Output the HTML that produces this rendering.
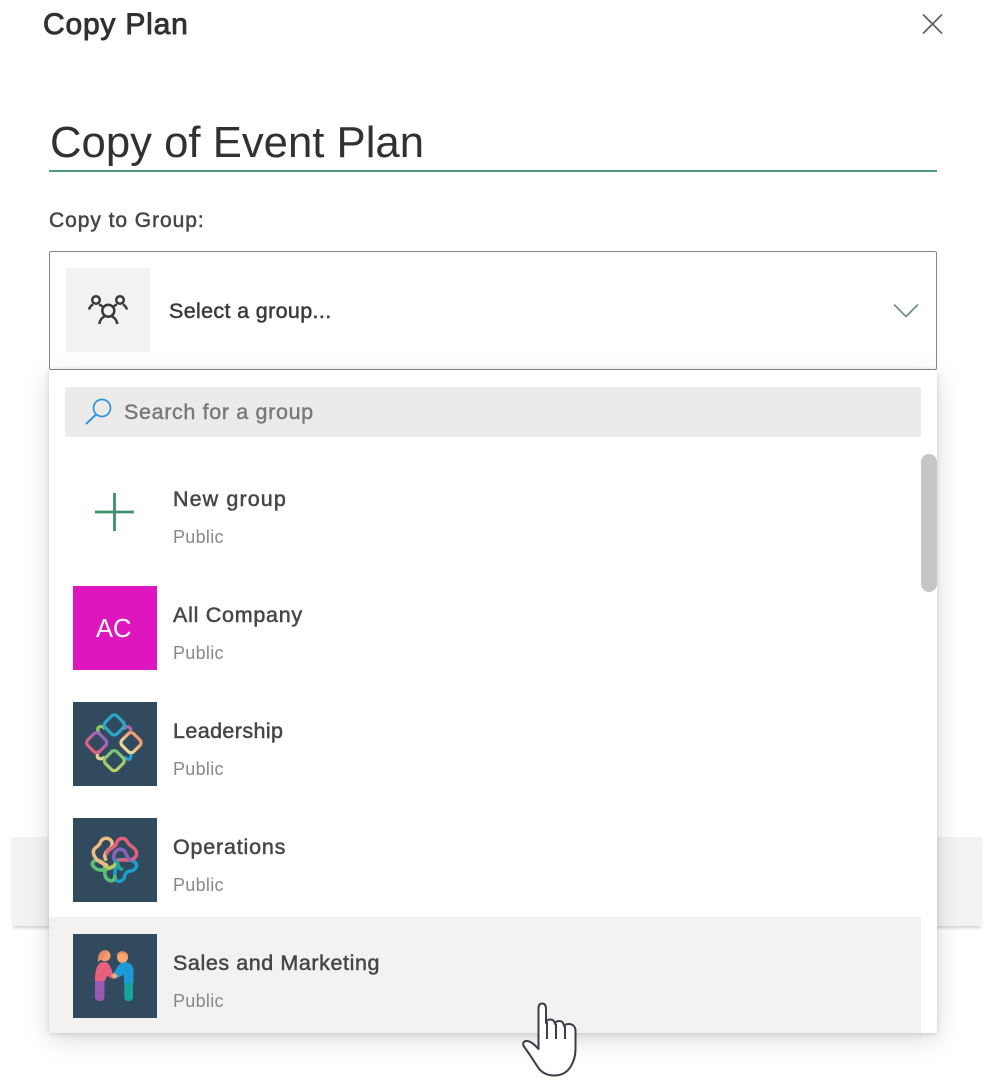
<!DOCTYPE html>
<html><head><meta charset="utf-8"><style>
html,body{margin:0;padding:0;background:#fff}
#p{position:relative;width:1002px;height:1084px;overflow:hidden;background:#fff;font-family:"Liberation Sans",sans-serif;filter:blur(.35px)}
#p div{position:absolute}
.t{white-space:nowrap;line-height:1}
.n{left:173px;font-size:21.5px;color:#484644;-webkit-text-stroke:.5px #484644}
.s{left:173px;font-size:18px;color:#8a8886;letter-spacing:.3px}
.a{left:73px;width:84px;height:84px;background:#324a5e}
svg{position:absolute;left:0;top:0}
</style></head><body><div id="p">
<div style="left:12px;top:837px;width:970px;height:89px;background:#f4f3f1;box-shadow:0 3px 3px -1px rgba(0,0,0,.18)"></div>
<div class="t" style="left:43px;top:10px;font-size:30px;color:#323130;-webkit-text-stroke:.9px #323130;letter-spacing:.8px">Copy Plan</div>
<div class="t" style="left:50px;top:121px;font-size:43.7px;color:#323130">Copy of Event Plan</div>
<div style="left:49px;top:170px;width:888px;height:2px;background:#4e9a7a"></div>
<div class="t" style="left:49px;top:210px;font-size:21px;color:#484644;-webkit-text-stroke:.5px #484644;letter-spacing:.95px">Copy to Group:</div>
<div style="left:49px;top:251px;width:886px;height:117px;border:1px solid #8a8886;border-radius:2px"></div>
<div style="left:66px;top:268px;width:84px;height:84px;background:#f3f2f1"></div>
<div class="t" style="left:169px;top:301px;font-size:21.5px;color:#3b3a39;-webkit-text-stroke:.5px #3b3a39;letter-spacing:.35px">Select a group...</div>
<div style="left:49px;top:370px;width:888px;height:663px;background:#fff;box-shadow:0 6px 24px rgba(0,0,0,.15),0 1px 5px rgba(0,0,0,.13)"></div>
<div style="left:65px;top:387px;width:856px;height:50px;background:#edebe9;border-radius:2px"></div>
<div class="t" style="left:124px;top:402px;font-size:21.5px;color:#7a7876;-webkit-text-stroke:.4px #7a7876;letter-spacing:.65px">Search for a group</div>
<div style="left:921px;top:454px;width:16px;height:138px;background:#c8c6c4;border-radius:8px"></div>
<div style="left:49px;top:917px;width:872px;height:116px;background:#f3f2f1"></div>

<div class="t n" style="top:489px;letter-spacing:1.1px">New group</div><div class="t s" style="top:528px">Public</div>
<div class="t n" style="top:605px;letter-spacing:.73px">All Company</div><div class="t s" style="top:644px">Public</div>
<div class="t n" style="top:721px;letter-spacing:.4px">Leadership</div><div class="t s" style="top:760px">Public</div>
<div class="t n" style="top:837px;letter-spacing:.8px">Operations</div><div class="t s" style="top:876px">Public</div>
<div class="t n" style="top:953px;letter-spacing:.58px">Sales and Marketing</div><div class="t s" style="top:992px">Public</div>

<div class="a" style="top:586px;background:#de16bd"></div>
<div class="t" style="left:96px;top:617px;color:#fff;font-size:25.500px">AC</div>
<div class="a" style="top:702px"></div>
<div class="a" style="top:818px"></div>
<div class="a" style="top:934px"></div>

<svg width="1002" height="1084" viewBox="0 0 1002 1084" fill="none">
 <defs>
  <linearGradient id="lp" x1="0" y1="0" x2="0" y2="1"><stop offset="0" stop-color="#9a66c0"/><stop offset="1" stop-color="#e8607a"/></linearGradient>
  <linearGradient id="lo" x1="0" y1="0" x2="0" y2="1"><stop offset="0" stop-color="#ee9a70"/><stop offset="1" stop-color="#eed79a"/></linearGradient>
  <linearGradient id="lg" x1="0" y1="0" x2="1" y2="1"><stop offset="0" stop-color="#6cc47a"/><stop offset="1" stop-color="#c0d060"/></linearGradient>
 </defs>
 <!-- close -->
 <path d="M923 14.500L942 33.500M942 14.500L923 33.500" stroke="#5f5e5c" stroke-width="1.600"/>
 <!-- chevron -->
 <path d="M894 304.500L906 316.500L918 304.500" stroke="#6f8f8c" stroke-width="1.700"/>
 <!-- group icon -->
 <g stroke="#3b3a39" stroke-width="2.500">
  <circle cx="96" cy="300" r="3.800"/><circle cx="120" cy="300" r="3.800"/>
  <circle cx="108.300" cy="310.700" r="6"/>
  <path d="M89 309.500C90 306 92 305 93 304.500M99 304.500C100.500 305 102 306 103 307M127 309.500C126 306 124 305 123 304.500M117 304.500C115.500 305 114 306 113 307"/>
  <path d="M99.300 324C100 319.500 102 317.500 104.500 316.500M117.300 324C116.500 319.500 114.500 317.500 112 316.500"/>
 </g>
 <!-- search -->
 <circle cx="102" cy="408" r="8.500" stroke="#2f93dc" stroke-width="1.700"/>
 <path d="M96 414.500L86 424" stroke="#2f93dc" stroke-width="1.900"/>
 <!-- plus -->
 <path d="M114.500 493V531M95 512H134" stroke="#3e8f6c" stroke-width="2.800"/>
 <!-- leadership -->
 <g fill="none" stroke-width="3.200">
  <path d="M99 733Q96 728 100 726.500Q103 726 105 729" stroke="#9ac05c"/>
  <path d="M123 729Q126 726 129 727Q132 729 130 733" stroke="#b066a8"/>
  <path d="M99 751Q96 755 98 758Q101 760 105 757" stroke="#e8d090"/>
  <path d="M124 757Q127 760 130 759Q132 756 130 752" stroke="#29a3d4"/>
  <rect x="106" y="716.700" width="16.500" height="16.500" rx="4" transform="rotate(45 114.300 725)" stroke="#29a8c8"/>
  <rect x="88.450" y="734.450" width="16.500" height="16.500" rx="4" transform="rotate(45 96.700 742.700)" stroke="url(#lp)"/>
  <rect x="122.750" y="734.450" width="16.500" height="16.500" rx="4" transform="rotate(45 131 742.700)" stroke="url(#lo)"/>
  <rect x="106" y="752.450" width="16.500" height="16.500" rx="4" transform="rotate(45 114.300 760.700)" stroke="url(#lg)"/>
 </g>
 <!-- operations -->
 <g transform="translate(65 810) scale(.3333)" fill="none" stroke-width="10.500" stroke-linecap="round">
  <path d="M155 150C175 148 195 148 208 155C222 165 212 182 195 183C182 185 180 195 178 203C172 216 155 218 150 205C146 190 155 170 155 150" stroke="#1aa0cc"/>
  <path d="M140 170C125 182 100 185 88 172C75 160 85 150 100 152C115 152 120 165 120 180C118 195 122 205 130 210C140 216 148 212 150 200" stroke="#5cbf74"/>
  <path d="M118 162C128 178 142 178 150 162" stroke="#b8cc5c"/>
  <path d="M125 165C110 160 88 150 85 128C84 112 100 112 105 100C108 88 120 82 130 86C145 92 145 108 132 118C122 126 115 135 122 148" stroke="#eebc80"/>
  <path d="M125 130C132 112 150 115 155 100C158 85 175 80 185 92C190 108 208 108 214 125C218 140 205 150 190 150L160 150" stroke="#e2607c"/>
  <path d="M148 150C142 130 155 115 170 118C185 122 182 140 195 150" stroke="#8a62b8"/>
  <path d="M155 152C160 165 160 175 170 178" stroke="#20a8a0"/>
 </g>
 <!-- sales and marketing -->
 <path d="M95 980H104.500V997C104.500 1000 102 1001 100 1001C97 1001 95 1000 95 997Z" fill="#9a5ab0"/>
 <path d="M124.300 981H133V997C133 1000 131 1001 128.500 1001C126 1001 124.300 1000 124.300 997Z" fill="#14a49c"/>
 <path d="M95 981C95 970 97 962 104 962C109 962 111 967 113 974L116 976L113 979L107 976L105 981Z" fill="#e8607e"/>
 <path d="M133.500 983V971C133.500 964 129 962 124 962C119 962 118 968 112 975L116 979C118 977 120 977 124 974.500V983Z" fill="#1c9ad6"/>
 <path d="M111 975L115 973L118 976L114 979Z" fill="#f4a878"/>
 <circle cx="105" cy="955.700" r="5.500" fill="#f0a070"/><path d="M98 962C97 953 102 949 108 950.500L103 958Z" fill="#e88a6a"/>
 <circle cx="122.500" cy="957.300" r="5.500" fill="#f6a66e"/><path d="M117 955C118 950 126 950 128 955L122 953.500Z" fill="#ec8e5c"/>
 <!-- hand cursor -->
 <path d="M538.500 1049V1009C538.500 1005 540 1003.500 542 1003.500C544.500 1003.500 546 1005 546 1009V1023C546 1020.500 548 1019.500 550.500 1019.500C553 1019.500 554.500 1021 555 1024C555.500 1021.500 557.500 1021 559.500 1021C562 1021 563.500 1022.500 564 1026C565 1024.500 567 1024 569 1024C573 1024 575.500 1027 575.500 1031V1049C575.500 1056 574 1061 571 1066C567 1073 561 1075.500 554 1075.500C548 1075.500 542 1073 538.500 1068C534 1061.500 531 1056 525 1048C522 1044 523 1041.500 526 1041C530 1040.500 535 1045 538.500 1049Z" fill="#fff" stroke="#3a3d4a" stroke-width="2" stroke-linejoin="round"/>
 <path d="M547 1022V1039M556 1024V1039M565 1026V1039" stroke="#3a3d4a" stroke-width="2"/>
</svg>
</div></body></html>
